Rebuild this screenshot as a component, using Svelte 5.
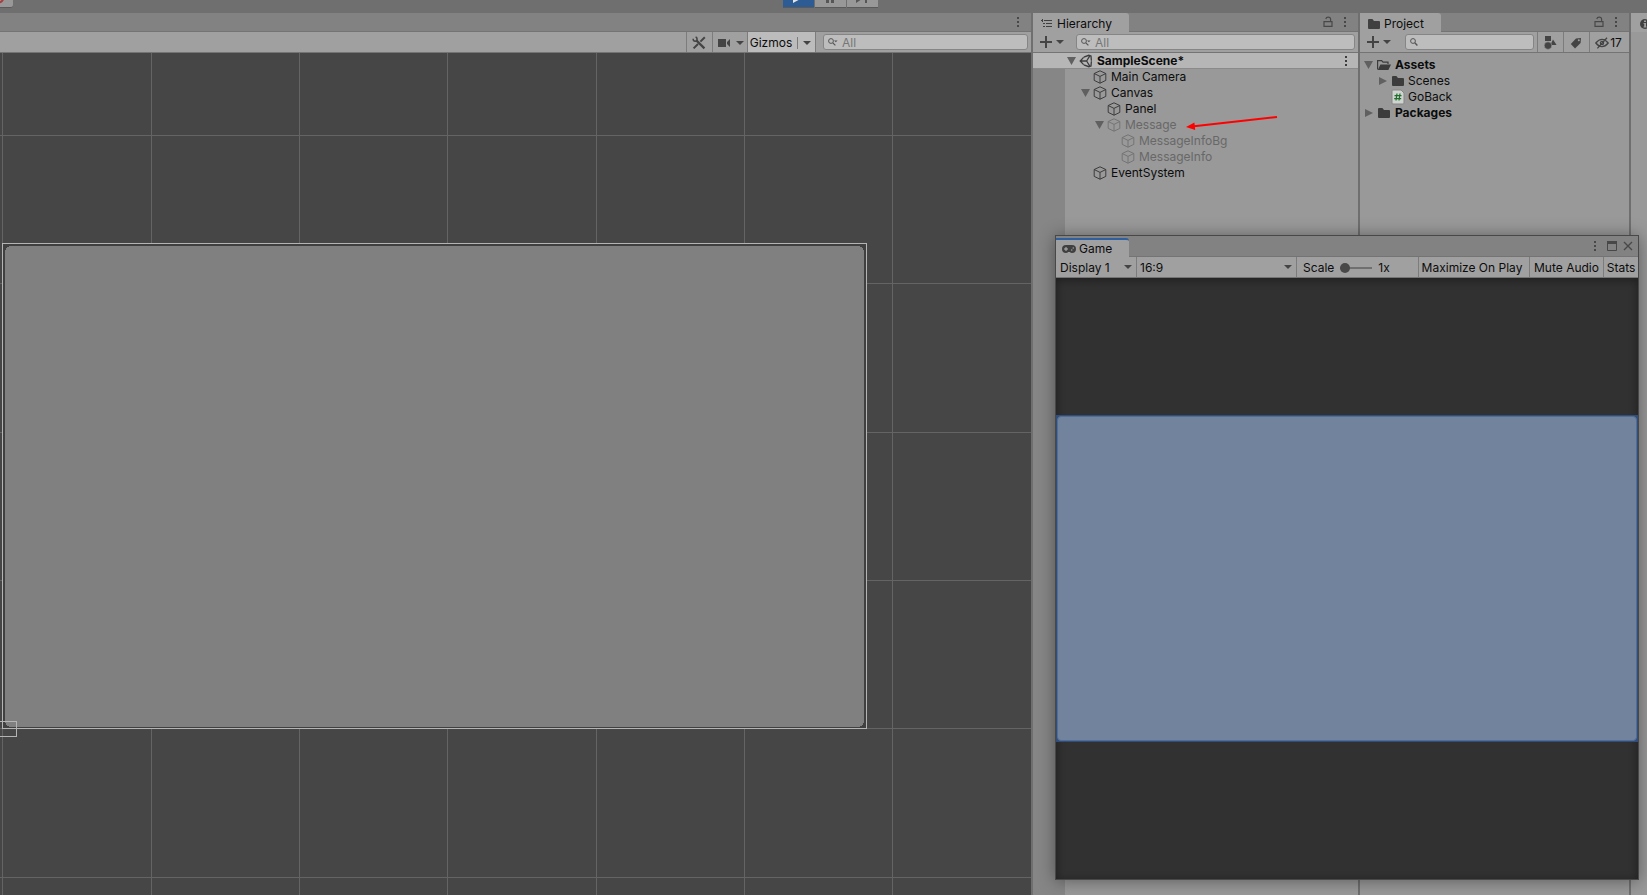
<script lang="ts">
	type Row = {
		name: string;
		depth: number;
		icon: string;
		open?: boolean;
		bold?: boolean;
		inactive?: boolean;
	};

	let hierarchy: Row[] = $state([
		{ name: 'SampleScene*', depth: 0, icon: 'unity', open: true, bold: true },
		{ name: 'Main Camera', depth: 1, icon: 'cube' },
		{ name: 'Canvas', depth: 1, icon: 'cube', open: true },
		{ name: 'Panel', depth: 2, icon: 'cube' },
		{ name: 'Message', depth: 2, icon: 'cube', open: true, inactive: true },
		{ name: 'MessageInfoBg', depth: 3, icon: 'cube', inactive: true },
		{ name: 'MessageInfo', depth: 3, icon: 'cube', inactive: true },
		{ name: 'EventSystem', depth: 1, icon: 'cube' }
	]);

	let project: Row[] = $state([
		{ name: 'Assets', depth: 0, icon: 'folderOpen', open: true, bold: true },
		{ name: 'Scenes', depth: 1, icon: 'folder', open: false },
		{ name: 'GoBack', depth: 1, icon: 'script' },
		{ name: 'Packages', depth: 0, icon: 'folder', open: false, bold: true }
	]);

	// drop every row that sits below a folded parent
	function visible(rows: Row[]) {
		let limit = Infinity;
		return rows.filter((row) => {
			if (row.depth > limit) return false;
			limit = row.open === false ? row.depth : Infinity;
			return true;
		});
	}

	const gridX = [2, 151, 299, 447, 596, 744, 892];
	const gridY = [82, 230, 379, 527, 675, 824];

	let playing = $state(true);
	let gizmos = $state(true);
	let scale = $state(1);
</script>

{#snippet icon(name: string)}
	{#if name === 'cube'}
		<svg class="icon" width="14" height="14" viewBox="0 0 14 14" fill="none" stroke="currentColor">
			<path d="M7 .8 12.8 3.5V10.4L7 13.2 1.2 10.4V3.5ZM1.2 3.5 7 6.4 12.8 3.5M7 6.4V13.2" />
		</svg>
	{:else if name === 'unity'}
		<svg class="icon" width="14" height="14" viewBox="0 0 14 14" fill="none" stroke="currentColor" stroke-width="1.3">
			<path d="M4.8 3.2 9.8 1.3 12 2 12.4 6.8M12.4 7.2 12 12 9.8 12.7 4.8 10.8M4.6 3.4 1.2 7 4.6 10.6M1.4 7H7.6M7.6 7 10.8 1.8M7.6 7 10.8 12.2" />
		</svg>
	{:else if name === 'folder'}
		<svg class="icon" width="14" height="14" viewBox="0 0 14 14" fill="currentColor">
			<path d="M1 3Q1 2 2 2H5.4L7 4H12Q13 4 13 5V11Q13 12 12 12H2Q1 12 1 11Z" />
		</svg>
	{:else if name === 'folderOpen'}
		<svg class="icon" width="14" height="14" viewBox="0 0 14 14">
			<path d="M.6 11.6V2.6H4.6L6 4.2H11V6" fill="none" stroke="currentColor" stroke-width="1.2" />
			<path d="M3.4 6.4H14L11.4 12H.8Z" fill="currentColor" />
		</svg>
	{:else if name === 'script'}
		<svg class="icon" width="14" height="16" viewBox="0 0 14 16">
			<path d="M1 2Q1 1 2 1H10L13 4V14Q13 15 12 15H2Q1 15 1 14Z" fill="#d0d4d0" stroke="#858585" />
			<path d="M6 4.5 5 11.5M9 4.5 8 11.5M3.5 6.6H10.5M3.2 9.6H10.2" fill="none" stroke="#1c6e28" stroke-width="1.2" />
		</svg>
	{:else if name === 'lock'}
		<svg class="icon" width="10" height="12" viewBox="0 0 10 12" fill="none" stroke="currentColor" stroke-width="1.2">
			<path d="M1 5.6H9V10.4H1ZM7.6 5.6V3.2Q7.6 1.2 5.2 1.2 3.2 1.2 2.8 3" />
		</svg>
	{:else if name === 'dots'}
		<svg class="icon" width="4" height="12" viewBox="0 0 4 12" fill="currentColor">
			<path d="M1 1H3V3H1ZM1 5H3V7H1ZM1 9H3V11H1Z" />
		</svg>
	{:else if name === 'plus'}
		<svg class="icon" width="12" height="12" viewBox="0 0 12 12" fill="currentColor">
			<path d="M5 0H7V5H12V7H7V12H5V7H0V5H5Z" />
		</svg>
	{:else if name === 'down'}
		<svg class="icon" width="8" height="4" viewBox="0 0 8 4" fill="currentColor"><path d="M0 0H8L4 4Z" /></svg>
	{:else if name === 'search'}
		<svg class="icon" width="10" height="8" viewBox="0 0 10 8" fill="none" stroke="currentColor">
			<circle cx="3" cy="3" r="2.4" />
			<path d="M4.8 4.8 7.4 7.4" stroke-width="1.2" />
			<path d="M6 2.4H9.6L7.8 4.2Z" fill="currentColor" stroke="none" />
		</svg>
	{:else if name === 'searchPlain'}
		<svg class="icon" width="10" height="8" viewBox="0 0 10 8" fill="none" stroke="currentColor">
			<circle cx="3" cy="3" r="2.4" />
			<path d="M4.8 4.8 7.4 7.4" stroke-width="1.4" />
		</svg>
	{/if}
{/snippet}

{#snippet tree(rows: Row[])}
	{#each visible(rows) as row (row.name)}
		<li class="row depth-{row.depth}" class:bold={row.bold} class:inactive={row.inactive} class:scene-row={row.icon === 'unity'}>
			{#if row.open === undefined}
				<span class="fold"></span>
			{:else}
				<button class="fold" aria-label="Toggle {row.name}" aria-expanded={row.open} onclick={() => (row.open = !row.open)}>
					<svg class="icon" width="10" height="10" viewBox="0 0 10 10" fill="currentColor">
						<path d={row.open ? 'M0 1H9L4.5 9Z' : 'M1 1V9L9 5Z'} />
					</svg>
				</button>
			{/if}
			{@render icon(row.icon)}
			<span class="name">{row.name}</span>
			{#if row.icon === 'unity'}
				<button class="row-menu" aria-label="Scene menu">{@render icon('dots')}</button>
			{/if}
		</li>
	{/each}
{/snippet}

<div class="editor">
	<header class="topbar">
		<button class="top-btn snap" aria-label="Snap">
			<svg class="icon" width="14" height="14" viewBox="0 0 14 14" fill="none">
				<circle cx="7" cy="7" r="5.6" stroke="#a83c3c" stroke-width="2" />
			</svg>
		</button>
		<div class="playback">
			<button class="top-btn" class:active={playing} aria-label="Play" onclick={() => (playing = !playing)}>
				<svg class="icon" width="12" height="12" viewBox="0 0 12 12" fill="currentColor"><path d="M1 0 12 6 1 12Z" /></svg>
			</button>
			<button class="top-btn" aria-label="Pause">
				<svg class="icon" width="12" height="12" viewBox="0 0 12 12" fill="currentColor"><path d="M2 0H5V12H2ZM7 0H10V12H7Z" /></svg>
			</button>
			<button class="top-btn" aria-label="Step">
				<svg class="icon" width="12" height="12" viewBox="0 0 12 12" fill="currentColor"><path d="M0 0 9 6 0 12ZM9 0H11V12H9Z" /></svg>
			</button>
		</div>
	</header>

	<main class="panes">
		<section class="pane" aria-label="Scene">
			<div class="tabs">
				<div class="tab-tools">
					<button aria-label="Scene options">{@render icon('dots')}</button>
				</div>
			</div>
			<div class="toolbar scene-toolbar">
				<button class="tool square" aria-label="Tools">
					<svg class="icon" width="14" height="14" viewBox="0 0 14 14" fill="none" stroke="currentColor">
						<path d="M4.6 4.6 12.4 12.4" stroke-width="2.2" />
						<path d="M1.2 2.8Q1 5 3.2 5.2 5.4 5 5 2.6 4.8 1.4 3.6 1" stroke-width="1.6" />
						<path d="M12.8 1.2 8.4 5.6M6 8 1.6 12.4" stroke-width="2" />
					</svg>
				</button>
				<button class="tool camera" aria-label="Scene camera">
					<svg class="icon" width="14" height="10" viewBox="0 0 14 10" fill="currentColor">
						<path d="M1 1H9V9H1ZM10 4 13 1V9L10 6Z" />
					</svg>
					{@render icon('down')}
				</button>
				<button class="tool gizmos" class:on={gizmos} onclick={() => (gizmos = !gizmos)}>
					<span>Gizmos</span>
					<i></i>
					{@render icon('down')}
				</button>
				<label class="search">
					{@render icon('search')}
					<input type="text" placeholder="All" aria-label="Search scene" />
				</label>
			</div>
			<div class="scene-view">
				<svg class="canvas" width="100%" height="100%" shape-rendering="crispEdges">
					{#each gridX as x}
						<rect {x} y="0" width="1" height="100%" fill="#646464" />
					{/each}
					{#each gridY as y}
						<rect x="0" {y} width="100%" height="1" fill="#646464" />
					{/each}
					<rect x="3" y="191" width="863" height="484" fill="#404040" />
					<rect x="5" y="193" width="859" height="481" rx="6" fill="#808080" />
					<rect x="2.5" y="190.5" width="864" height="485" fill="none" stroke="#b4b4b4" />
					<rect x="-10.5" y="668.5" width="27" height="15" fill="none" stroke="#b4b4b4" />
				</svg>
			</div>
		</section>

		<section class="pane" aria-label="Hierarchy">
			<div class="tabs">
				<h2 class="tab hierarchy-tab">
					<svg class="icon" width="12" height="10" viewBox="0 0 12 10" fill="currentColor">
						<path d="M3 1H11V2H3ZM5 4H11V5H5ZM5 7H11V8H5ZM0 1H2V2H0ZM1 0H2V3H1ZM2 4H4V5H2ZM2 7H4V8H2Z" />
					</svg>
					Hierarchy
				</h2>
				<div class="tab-tools">
					<button aria-label="Lock hierarchy">{@render icon('lock')}</button>
					<button aria-label="Hierarchy options">{@render icon('dots')}</button>
				</div>
			</div>
			<div class="toolbar">
				<button class="add" aria-label="Create object">
					{@render icon('plus')}
					{@render icon('down')}
				</button>
				<label class="search">
					{@render icon('search')}
					<input type="text" placeholder="All" aria-label="Search hierarchy" />
				</label>
			</div>
			<ul class="tree hierarchy">
				{@render tree(hierarchy)}
			</ul>
			<svg class="pointer" width="94" height="18" viewBox="0 0 94 18">
				<path d="M91 4 8 13.2" stroke="#ff0000" stroke-width="2" />
				<path d="M0 14 8.4 9.4 9.2 17Z" fill="#ff0000" />
			</svg>
		</section>

		<section class="pane" aria-label="Project">
			<div class="tabs">
				<h2 class="tab project-tab">
					{@render icon('folder')}
					Project
				</h2>
				<div class="tab-tools">
					<button aria-label="Lock project">{@render icon('lock')}</button>
					<button aria-label="Project options">{@render icon('dots')}</button>
				</div>
			</div>
			<div class="toolbar">
				<button class="add" aria-label="Create asset">
					{@render icon('plus')}
					{@render icon('down')}
				</button>
				<label class="search project-search">
					{@render icon('searchPlain')}
					<input type="text" aria-label="Search project" />
				</label>
				<button class="tool square" aria-label="Search by type">
					<svg class="icon" width="14" height="14" viewBox="0 0 14 14" fill="currentColor">
						<path d="M2 0H8V5H2ZM10 3.4 13.6 9H7.4Z" />
						<circle cx="5" cy="9.6" r="3.8" stroke="#a0a0a0" stroke-width=".6" />
					</svg>
				</button>
				<button class="tool square" aria-label="Search by label">
					<svg class="icon" width="12" height="12" viewBox="0 0 12 12">
						<path d="M6 1.6 11 1 10.6 6 5 11.4 .8 7Z" fill="currentColor" />
						<circle cx="8.8" cy="3.2" r="1" fill="#a0a0a0" />
					</svg>
				</button>
				<button class="tool hidden-count" aria-label="17 hidden packages">
					<svg class="icon" width="14" height="12" viewBox="0 0 14 12" fill="none" stroke="currentColor" stroke-width="1.3">
						<path d="M.8 6Q3.8 2.4 7 2.4T13.2 6Q10.2 9.6 7 9.6T.8 6ZM12 .8 2.4 11.4" />
						<circle cx="7" cy="6" r="1.6" />
					</svg>
					<span>17</span>
				</button>
			</div>
			<ul class="tree project">
				{@render tree(project)}
			</ul>
		</section>

		<section class="pane" aria-label="Inspector">
			<div class="tabs">
				<div class="tab inspector-tab">
					<svg class="icon" width="12" height="12" viewBox="0 0 12 12">
						<circle cx="6" cy="6" r="5" fill="currentColor" />
						<path d="M5 2.4H7V4H5ZM4.6 5H7V8.4H7.6V9.4H4.6V8.4H5.2V6H4.6Z" fill="#a0a0a0" />
					</svg>
				</div>
			</div>
		</section>
	</main>

	<section class="game-window" aria-label="Game">
		<div class="tabs">
			<h2 class="tab game-tab">
				<svg class="icon" width="14" height="8" viewBox="0 0 14 8">
					<path d="M4 0H10A4 4 0 0 1 10 8Q8.6 8 7.8 7H6.2Q5.4 8 4 8A4 4 0 0 1 4 0Z" fill="currentColor" />
					<path d="M2 4H6M4 2V6M9 5H10.4M10.6 3H12" stroke="#b4b4b4" />
				</svg>
				Game
			</h2>
			<div class="tab-tools window-tools">
				<button class="window-menu" aria-label="Game options">{@render icon('dots')}</button>
				<button aria-label="Maximize">
					<svg class="icon" width="10" height="10" viewBox="0 0 10 10">
						<path d="M.5 .5H9.5V9.5H.5Z" fill="none" stroke="currentColor" />
						<path d="M0 0H10V3H0Z" fill="currentColor" />
					</svg>
				</button>
				<button aria-label="Close">
					<svg class="icon" width="10" height="10" viewBox="0 0 10 10" fill="none" stroke="currentColor" stroke-width="1.4">
						<path d="M1 1 9 9M9 1 1 9" />
					</svg>
				</button>
			</div>
		</div>
		<div class="toolbar game-toolbar">
			<label class="drop display">
				<select aria-label="Display">
					<option>Display 1</option>
					<option>Display 2</option>
				</select>
				{@render icon('down')}
			</label>
			<label class="drop aspect">
				<select aria-label="Aspect ratio">
					<option>16:9</option>
					<option>Free Aspect</option>
				</select>
				{@render icon('down')}
			</label>
			<label class="scale">
				<span>Scale</span>
				<input type="range" min="1" max="5" bind:value={scale} />
				<output>{scale}x</output>
			</label>
			<button class="tool maximize">Maximize On Play</button>
			<button class="tool mute">Mute Audio</button>
			<button class="tool stats">Stats</button>
		</div>
		<div class="game-view">
			<div class="game-screen"><div class="panel"></div></div>
		</div>
	</section>
</div>

<style>
	:global(body) {
		background: #6f6f6f;
	}

	.editor {
		position: relative;
		display: flex;
		flex-direction: column;
		min-height: 100vh;
		overflow: hidden;
		background: #6f6f6f;
		color: #0c0c0c;
		font-family: Inter, 'Liberation Sans', sans-serif;
		font-size: 12px;
		line-height: 16px;
	}

	.editor * {
		box-sizing: border-box;
	}

	button,
	input,
	select {
		margin: 0;
		padding: 0;
		border: 0;
		border-radius: 0;
		background: none;
		color: inherit;
		font: inherit;
	}

	button {
		display: flex;
		align-items: center;
		justify-content: center;
	}

	.icon {
		display: block;
		flex: none;
	}

	/* top bar */
	.topbar {
		display: flex;
		align-items: flex-end;
		justify-content: space-between;
		height: 13px;
		padding-bottom: 5px;
		overflow: hidden;
	}

	.top-btn {
		width: 31px;
		height: 22px;
		background: #989898;
		border-bottom: 1px solid #5a5a5a;
		color: #565656;
	}

	.snap {
		width: 13px;
		justify-content: flex-end;
		padding-right: 8px;
		border-bottom-right-radius: 3px;
	}

	.playback {
		display: flex;
		gap: 1px;
		margin: 0 auto;
	}

	.top-btn.active {
		background: #2d5c94;
		color: #e4e4e4;
	}

	/* docked panes */
	.panes {
		flex: 1;
		display: grid;
		grid-template-columns: 1fr 325px 269px 16px;
		gap: 2px;
	}

	.pane {
		position: relative;
		display: flex;
		flex-direction: column;
		min-width: 0;
		background: #999999;
		overflow: hidden;
	}

	.tabs {
		display: flex;
		height: 19px;
		flex: none;
		background: #828282;
		border-bottom: 1px solid #747474;
	}

	.tab {
		display: flex;
		align-items: center;
		gap: 4px;
		height: 19px;
		margin: 0;
		padding: 2px 8px 0;
		background: #a0a0a0;
		border-radius: 0 3px 0 0;
		font-size: 12px;
		font-weight: 400;
	}

	.tab .icon {
		color: #404040;
	}

	.hierarchy-tab {
		width: 96px;
	}

	.project-tab {
		width: 81px;
		gap: 3px;
		padding-left: 7px;
	}

	.tab-tools {
		display: flex;
		align-items: center;
		gap: 10px;
		margin-left: auto;
		padding-right: 11px;
		color: #484848;
	}

	.toolbar {
		display: flex;
		align-items: center;
		height: 21px;
		flex: none;
		background: #a0a0a0;
		border-bottom: 1px solid #747474;
	}

	.scene-toolbar {
		justify-content: flex-end;
	}

	.tool {
		height: 20px;
		gap: 5px;
		padding-top: 2px;
		border-left: 1px solid #7c7c7c;
		white-space: nowrap;
	}

	.tool .icon,
	.add .icon,
	.drop .icon {
		color: #444444;
	}

	.square {
		width: 26px;
		padding-right: 2px;
	}

	.camera {
		width: 35px;
	}

	.gizmos {
		width: 69px;
		padding-right: 2px;
		border-right: 1px solid #7c7c7c;
	}

	.gizmos.on {
		background: #bcbcbc;
	}

	.gizmos i {
		width: 1px;
		height: 12px;
		background: #7c7c7c;
	}

	.search {
		display: flex;
		align-items: center;
		gap: 4px;
		flex: 1;
		min-width: 0;
		height: 16px;
		margin-right: 3px;
		padding: 0 4px;
		background: #bdbdbd;
		border: 1px solid #858585;
		border-radius: 3px;
		color: #555555;
	}

	.scene-toolbar .search {
		flex: 0 0 205px;
		margin-left: 7px;
	}

	.search input {
		flex: 1;
		min-width: 0;
		height: 14px;
		padding-top: 1px;
		outline: none;
	}

	.search input::placeholder {
		color: #767676;
		opacity: 1;
	}

	.add {
		gap: 4px;
		width: 43px;
		padding-right: 6px;
	}

	.project-search {
		margin-left: 2px;
	}

	.hidden-count {
		width: 40px;
		gap: 1px;
		padding-right: 2px;
	}

	/* scene */
	.scene-view {
		flex: 1;
		background: #464646;
		overflow: hidden;
	}

	.canvas {
		display: block;
	}

	/* trees */
	.tree {
		flex: 1;
		margin: 0;
		padding: 0;
		list-style: none;
	}

	.hierarchy {
		background: linear-gradient(to right, #868686 32px, #999999 32px);
	}

	.project {
		padding: 4px 0;
	}

	.row {
		display: flex;
		align-items: center;
		gap: 2px;
		height: 16px;
		padding-left: 34px;
		color: #0c0c0c;
	}

	.row .icon {
		color: #3c3c3c;
	}

	.row .name {
		padding-left: 2px;
	}

	.fold {
		flex: none;
		width: 10px;
		height: 16px;
	}

	.row .fold .icon {
		color: #606060;
	}

	.hierarchy .depth-1 {
		padding-left: 48px;
	}

	.hierarchy .depth-2 {
		padding-left: 62px;
	}

	.hierarchy .depth-3 {
		padding-left: 76px;
	}

	.project .row {
		gap: 3px;
		padding-left: 4px;
	}

	.project .depth-1 {
		padding-left: 18px;
	}

	.project .name {
		padding-left: 0;
	}

	.project .bold .name {
		padding-left: 1px;
	}

	.bold {
		font-weight: 700;
	}

	.row.inactive {
		color: #686868;
	}

	.row.inactive > .icon {
		color: #747474;
	}

	.scene-row {
		background: #b6b6b6;
		border-bottom: 1px solid #8a8a8a;
	}

	.row-menu {
		margin-left: auto;
		padding-right: 10px;
	}

	.pointer {
		position: absolute;
		left: 153px;
		top: 100px;
		pointer-events: none;
	}

	/* floating game window */
	.game-window {
		position: absolute;
		top: 235px;
		right: 8px;
		bottom: 15px;
		width: 584px;
		display: flex;
		flex-direction: column;
		background: #828282;
		border: 1px solid #484848;
		box-shadow: 0 1px 16px rgba(0, 0, 0, 0.4);
	}

	.game-window .tabs {
		height: 21px;
		padding-top: 2px;
	}

	.game-tab {
		width: 73px;
		gap: 3px;
		padding: 0 6px;
		border-top: 2px solid #2f5f9e;
	}

	.window-tools {
		padding: 0 5px 2px 0;
		gap: 6px;
	}

	.window-menu {
		margin-right: 4px;
	}

	.drop {
		display: flex;
		align-items: center;
		height: 20px;
		padding: 0 4px 0 3px;
		border-right: 1px solid #7c7c7c;
	}

	.drop select {
		flex: 1;
		min-width: 0;
		height: 18px;
		padding-top: 2px;
		appearance: none;
		outline: none;
	}

	.display {
		width: 81px;
		padding-left: 4px;
	}

	.aspect {
		flex: 1;
	}

	.scale {
		display: flex;
		align-items: center;
		gap: 6px;
		width: 121px;
		padding: 2px 0 0 6px;
	}

	.scale input {
		width: 32px;
		height: 16px;
		appearance: none;
		background: linear-gradient(#707070, #707070) center / 100% 2px no-repeat;
	}

	.scale input::-webkit-slider-thumb {
		appearance: none;
		width: 10px;
		height: 10px;
		border-radius: 50%;
		background: #484848;
	}

	.maximize {
		width: 111px;
		padding-right: 4px;
	}

	.mute {
		width: 74px;
	}

	.stats {
		width: 35px;
	}

	.game-view {
		flex: 1;
		display: flex;
		flex-direction: column;
		justify-content: center;
		background: #313131;
		box-shadow: inset 0 2px 10px rgba(0, 0, 0, 0.4);
	}

	.game-screen {
		aspect-ratio: 16 / 9;
		padding: 1px;
		background: #314d79;
	}

	.panel {
		height: 100%;
		background: #72839d;
		border: 1px solid #526c93;
		border-radius: 4px;
	}
</style>
